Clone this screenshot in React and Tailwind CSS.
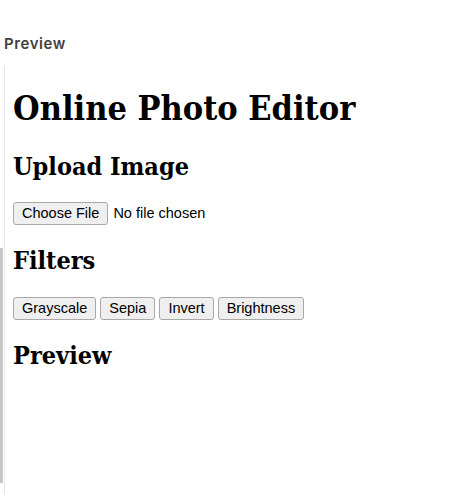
import React from "react";

const serif = "font-['DejaVu_Serif_Condensed','DejaVu_Serif','Liberation_Serif',serif] font-stretch-condensed";
const btn =
  "bg-[#efefef] border border-[#a8a8a8] rounded-[3px] px-[8px] h-[23px] text-[14.5px] leading-none text-black font-['Liberation_Sans',Arial,sans-serif]";

export default function App() {
  return (
    <div className="relative w-[474px] h-[501px] bg-white overflow-hidden">
      <div className="pt-[35px] pl-[4px] text-[15px] font-semibold tracking-[0.6px] text-[#3f3f3f] font-['Inter',sans-serif] leading-[18px]">
        Preview
      </div>
      <div className="mt-[13px] ml-[4px] h-[428px] border-l border-[#e6e6e6] pl-[8px]">
        <h1 className={`${serif} font-bold text-[34px] leading-[40px] pt-[22px] text-black`}>
          Online Photo Editor
        </h1>
        <h2 className={`${serif} font-bold text-[25px] leading-[30px] mt-[24px] text-black`}>
          Upload Image
        </h2>
        <div className="mt-[20px] flex items-center gap-[5px] font-['Liberation_Sans',Arial,sans-serif] text-[14.5px] text-black">
          <button className={btn}>Choose File</button>
          <span>No file chosen</span>
        </div>
        <h2 className={`${serif} font-bold text-[25px] leading-[30px] mt-[21px] text-black`}>
          Filters
        </h2>
        <div className="mt-[21px] flex items-center gap-[4px]">
          <button className={btn}>Grayscale</button>
          <button className={btn}>Sepia</button>
          <button className={btn}>Invert</button>
          <button className={btn}>Brightness</button>
        </div>
        <h2 className={`${serif} font-bold text-[25px] leading-[30px] mt-[21px] text-black`}>
          Preview
        </h2>
      </div>
      <div className="absolute left-0 top-[248px] w-[3px] h-[235px] bg-[#c6c6c6]" />
    </div>
  );
}
